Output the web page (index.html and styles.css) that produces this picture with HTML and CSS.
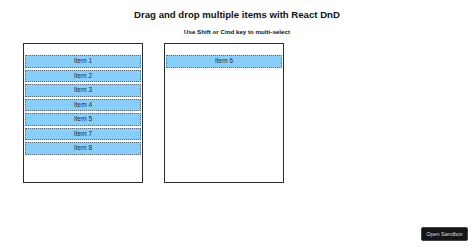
FILE: index.html
```html
<!DOCTYPE html>
<html>
<head>
<meta charset="utf-8">
<link rel="stylesheet" href="styles.css">
</head>
<body>
<div class="app">
  <h1 class="title">Drag and drop multiple items with React DnD</h1>
  <p class="subtitle">Use Shift or Cmd key to multi-select</p>
  <div class="lists">
    <div class="list">
      <div class="item">Item 1</div>
      <div class="item">Item 2</div>
      <div class="item">Item 3</div>
      <div class="item">Item 4</div>
      <div class="item">Item 5</div>
      <div class="item">Item 7</div>
      <div class="item">Item 8</div>
    </div>
    <div class="list">
      <div class="item">Item 6</div>
    </div>
  </div>
</div>
<button class="sandbox-btn">Open Sandbox</button>
</body>
</html>
```
FILE: styles.css
```css
* { box-sizing: border-box; }
html, body { margin: 0; padding: 0; background: #fff; }
body {
  font-family: "Liberation Sans", Arial, sans-serif;
  color: #111;
  width: 474px;
  height: 248px;
  overflow: hidden;
}
.app { padding-top: 8px; }
.title {
  margin: 0;
  text-align: center;
  font-size: 9.6px;
  line-height: 13px;
  font-weight: bold;
}
.subtitle {
  margin: 7px 0 0 0;
  text-align: center;
  font-size: 6.2px;
  line-height: 8px;
  font-weight: bold;
}
.lists {
  display: flex;
  gap: 21px;
  padding-left: 23px;
  margin-top: 7px;
}
.list {
  width: 120px;
  height: 140px;
  border: 1.5px solid #2a2a2a;
  padding: 11px 1px 0 1px;
}
.item {
  height: 12.5px;
  margin-bottom: 2.05px;
  background: #87cefa;
  border: 1px dotted #5a6a7a;
  font-size: 6.5px;
  line-height: 10.5px;
  text-align: center;
  color: #1e2a36;
}
.sandbox-btn {
  position: fixed;
  right: 6px;
  bottom: 7px;
  width: 47px;
  height: 14px;
  padding: 0;
  background: #151515;
  color: #ddd;
  border: 1px solid #444;
  border-radius: 2px;
  font-family: "Liberation Sans", Arial, sans-serif;
  font-size: 5.5px;
  line-height: 12px;
}
```
